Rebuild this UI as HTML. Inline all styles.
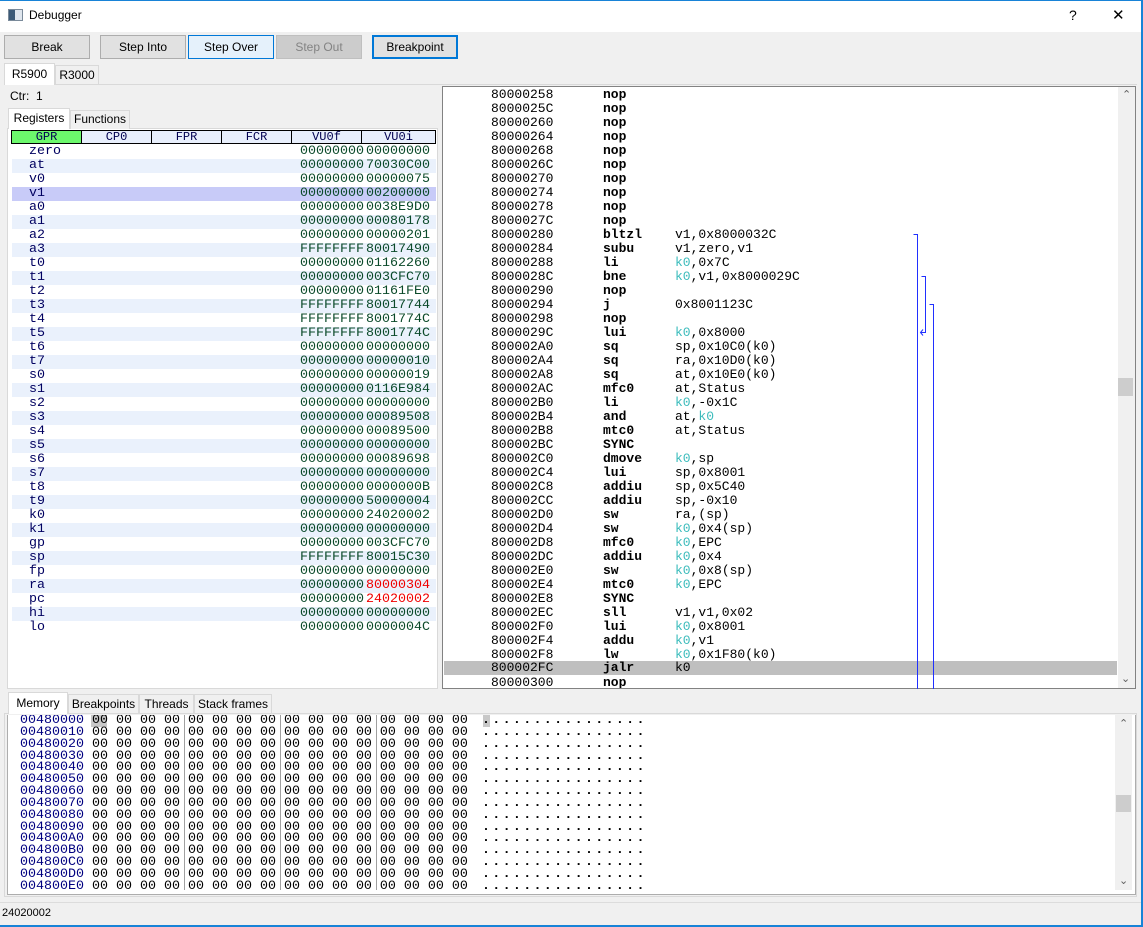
<!DOCTYPE html>
<html><head><meta charset="utf-8"><style>
*{margin:0;padding:0;box-sizing:border-box}
body{width:1143px;height:927px;background:#f0f0f0;font-family:"Liberation Sans",sans-serif;font-size:12px;position:relative;overflow:hidden;color:#000}
.a{position:absolute}
.btn{position:absolute;top:35px;height:24px;border:1px solid #adadad;background:#e1e1e1;text-align:center;line-height:22px;font-size:12px}
.mono{font-family:"Liberation Mono",monospace;font-size:13.33px}
.r{position:absolute;left:12px;width:424px;height:14px;line-height:14px;white-space:pre}
.r .n{position:absolute;left:17px;color:#000060}
.r .h{position:absolute;left:288px;color:#0b4a2a}
.r .l{position:absolute;left:354px;color:#0b4a2a}
.d{position:absolute;left:444px;width:673px;height:14px;line-height:14px;white-space:pre}
.d .ad{position:absolute;left:47px;color:#000}
.d .op{position:absolute;left:159px;font-weight:bold}
.d .ar{position:absolute;left:231px}
.k{color:#3cbcbc}
.tab{position:absolute;border:1px solid #d9d9d9;border-bottom:none;background:#f0f0f0;text-align:center;font-size:12px}
.hd{position:absolute;top:130px;height:14px;border:1px solid #000;border-left:none;background:#e8effc;text-align:center;line-height:12px;font-family:"Liberation Mono",monospace;font-size:12px;color:#000050}
</style></head><body>
<div class="a" style="left:0;top:0;width:1143px;height:32px;background:#fff;border-top:1px solid #1883d7"></div>
<div class="a" style="left:1141px;top:0;width:2px;height:927px;background:#1883d7"></div>
<div class="a" style="left:0;top:925px;width:1143px;height:2px;background:#1883d7"></div>
<div class="a" style="left:8px;top:9px;width:15px;height:12px;border:1px solid #7a8a9a;background:linear-gradient(90deg,#3c5a78 0 6px,#dfe6ee 6px)"></div>
<div class="a" style="left:29px;top:8px;font-size:12px">Debugger</div>
<div class="a" style="left:1069px;top:7px;font-size:14px">?</div>
<div class="a" style="left:1112px;top:6px;font-size:15px;font-weight:300">✕</div>

<div class="btn" style="left:4px;width:86px">Break</div>
<div class="btn" style="left:100px;width:86px">Step Into</div>
<div class="btn" style="left:188px;width:86px;background:#e5f1fb;border-color:#0078d7">Step Over</div>
<div class="btn" style="left:276px;width:86px;background:#cccccc;border-color:#bfbfbf;color:#838383">Step Out</div>
<div class="btn" style="left:372px;width:86px;border:2px solid #0078d7;line-height:20px">Breakpoint</div>

<div class="a" style="left:4px;top:84px;width:1133px;height:606px;border-top:1px solid #d9d9d9"></div>
<div class="tab" style="left:4px;top:63px;width:51px;height:22px;background:#fff;line-height:20px">R5900</div>
<div class="tab" style="left:55px;top:65px;width:44px;height:19px;line-height:18px">R3000</div>
<div class="a" style="left:10px;top:89px">Ctr:&nbsp; 1</div>

<div class="a" style="left:7px;top:128px;width:431px;height:561px;border:1px solid #d9d9d9;background:#fff"></div>
<div class="tab" style="left:8px;top:108px;width:62px;height:21px;background:#fff;line-height:18px">Registers</div>
<div class="tab" style="left:70px;top:110px;width:60px;height:19px;line-height:16px">Functions</div>

<div class="hd" style="left:11px;width:71px;background:#6cf86c;border-left:1px solid #000">GPR</div>
<div class="hd" style="left:82px;width:70px">CP0</div>
<div class="hd" style="left:152px;width:70px">FPR</div>
<div class="hd" style="left:222px;width:70px">FCR</div>
<div class="hd" style="left:292px;width:70px">VU0f</div>
<div class="hd" style="left:362px;width:74px">VU0i</div>

<div class="mono">
<div class="r" style="top:145px"><span class="n">zero</span><span class="h">00000000</span><span class="l">00000000</span></div>
<div class="r" style="top:159px;background:#eaf1fc"><span class="n">at</span><span class="h">00000000</span><span class="l">70030C00</span></div>
<div class="r" style="top:173px"><span class="n">v0</span><span class="h">00000000</span><span class="l">00000075</span></div>
<div class="r" style="top:187px;background:#c8cbf8"><span class="n">v1</span><span class="h">00000000</span><span class="l">00200000</span></div>
<div class="r" style="top:201px"><span class="n">a0</span><span class="h">00000000</span><span class="l">0038E9D0</span></div>
<div class="r" style="top:215px;background:#eaf1fc"><span class="n">a1</span><span class="h">00000000</span><span class="l">00080178</span></div>
<div class="r" style="top:229px"><span class="n">a2</span><span class="h">00000000</span><span class="l">00000201</span></div>
<div class="r" style="top:243px;background:#eaf1fc"><span class="n">a3</span><span class="h">FFFFFFFF</span><span class="l">80017490</span></div>
<div class="r" style="top:257px"><span class="n">t0</span><span class="h">00000000</span><span class="l">01162260</span></div>
<div class="r" style="top:271px;background:#eaf1fc"><span class="n">t1</span><span class="h">00000000</span><span class="l">003CFC70</span></div>
<div class="r" style="top:285px"><span class="n">t2</span><span class="h">00000000</span><span class="l">01161FE0</span></div>
<div class="r" style="top:299px;background:#eaf1fc"><span class="n">t3</span><span class="h">FFFFFFFF</span><span class="l">80017744</span></div>
<div class="r" style="top:313px"><span class="n">t4</span><span class="h">FFFFFFFF</span><span class="l">8001774C</span></div>
<div class="r" style="top:327px;background:#eaf1fc"><span class="n">t5</span><span class="h">FFFFFFFF</span><span class="l">8001774C</span></div>
<div class="r" style="top:341px"><span class="n">t6</span><span class="h">00000000</span><span class="l">00000000</span></div>
<div class="r" style="top:355px;background:#eaf1fc"><span class="n">t7</span><span class="h">00000000</span><span class="l">00000010</span></div>
<div class="r" style="top:369px"><span class="n">s0</span><span class="h">00000000</span><span class="l">00000019</span></div>
<div class="r" style="top:383px;background:#eaf1fc"><span class="n">s1</span><span class="h">00000000</span><span class="l">0116E984</span></div>
<div class="r" style="top:397px"><span class="n">s2</span><span class="h">00000000</span><span class="l">00000000</span></div>
<div class="r" style="top:411px;background:#eaf1fc"><span class="n">s3</span><span class="h">00000000</span><span class="l">00089508</span></div>
<div class="r" style="top:425px"><span class="n">s4</span><span class="h">00000000</span><span class="l">00089500</span></div>
<div class="r" style="top:439px;background:#eaf1fc"><span class="n">s5</span><span class="h">00000000</span><span class="l">00000000</span></div>
<div class="r" style="top:453px"><span class="n">s6</span><span class="h">00000000</span><span class="l">00089698</span></div>
<div class="r" style="top:467px;background:#eaf1fc"><span class="n">s7</span><span class="h">00000000</span><span class="l">00000000</span></div>
<div class="r" style="top:481px"><span class="n">t8</span><span class="h">00000000</span><span class="l">0000000B</span></div>
<div class="r" style="top:495px;background:#eaf1fc"><span class="n">t9</span><span class="h">00000000</span><span class="l">50000004</span></div>
<div class="r" style="top:509px"><span class="n">k0</span><span class="h">00000000</span><span class="l">24020002</span></div>
<div class="r" style="top:523px;background:#eaf1fc"><span class="n">k1</span><span class="h">00000000</span><span class="l">00000000</span></div>
<div class="r" style="top:537px"><span class="n">gp</span><span class="h">00000000</span><span class="l">003CFC70</span></div>
<div class="r" style="top:551px;background:#eaf1fc"><span class="n">sp</span><span class="h">FFFFFFFF</span><span class="l">80015C30</span></div>
<div class="r" style="top:565px"><span class="n">fp</span><span class="h">00000000</span><span class="l">00000000</span></div>
<div class="r" style="top:579px;background:#eaf1fc"><span class="n">ra</span><span class="h">00000000</span><span class="l" style="color:#f00000">80000304</span></div>
<div class="r" style="top:593px"><span class="n">pc</span><span class="h">00000000</span><span class="l" style="color:#f00000">24020002</span></div>
<div class="r" style="top:607px;background:#eaf1fc"><span class="n">hi</span><span class="h">00000000</span><span class="l">00000000</span></div>
<div class="r" style="top:621px"><span class="n">lo</span><span class="h">00000000</span><span class="l">0000004C</span></div>
</div>

<!-- disassembly -->
<div class="a" style="left:442px;top:86px;width:694px;height:603px;border:1px solid #828282;background:#fff"></div>
<div class="a" style="left:1118px;top:87px;width:17px;height:601px;background:#f0f0f0"></div>
<div class="a" style="left:1118px;top:378px;width:15px;height:18px;background:#cdcdcd"></div>
<div class="a" style="left:1122px;top:88px;font-size:11px;color:#606060">&#8963;</div>
<div class="a" style="left:1121px;top:672px;font-size:11px;color:#606060">&#8964;</div>
<div class="a" style="left:444px;top:661px;width:673px;height:14px;background:#bfbfbf"></div>
<div class="mono" style="font-size:13px">
<div class="d" style="top:88px"><span class="ad">80000258</span><span class="op">nop</span></div>
<div class="d" style="top:102px"><span class="ad">8000025C</span><span class="op">nop</span></div>
<div class="d" style="top:116px"><span class="ad">80000260</span><span class="op">nop</span></div>
<div class="d" style="top:130px"><span class="ad">80000264</span><span class="op">nop</span></div>
<div class="d" style="top:144px"><span class="ad">80000268</span><span class="op">nop</span></div>
<div class="d" style="top:158px"><span class="ad">8000026C</span><span class="op">nop</span></div>
<div class="d" style="top:172px"><span class="ad">80000270</span><span class="op">nop</span></div>
<div class="d" style="top:186px"><span class="ad">80000274</span><span class="op">nop</span></div>
<div class="d" style="top:200px"><span class="ad">80000278</span><span class="op">nop</span></div>
<div class="d" style="top:214px"><span class="ad">8000027C</span><span class="op">nop</span></div>
<div class="d" style="top:228px"><span class="ad">80000280</span><span class="op">bltzl</span><span class="ar">v1,0x8000032C</span></div>
<div class="d" style="top:242px"><span class="ad">80000284</span><span class="op">subu</span><span class="ar">v1,zero,v1</span></div>
<div class="d" style="top:256px"><span class="ad">80000288</span><span class="op">li</span><span class="ar"><span class="k">k0</span>,0x7C</span></div>
<div class="d" style="top:270px"><span class="ad">8000028C</span><span class="op">bne</span><span class="ar"><span class="k">k0</span>,v1,0x8000029C</span></div>
<div class="d" style="top:284px"><span class="ad">80000290</span><span class="op">nop</span></div>
<div class="d" style="top:298px"><span class="ad">80000294</span><span class="op">j</span><span class="ar">0x8001123C</span></div>
<div class="d" style="top:312px"><span class="ad">80000298</span><span class="op">nop</span></div>
<div class="d" style="top:326px"><span class="ad">8000029C</span><span class="op">lui</span><span class="ar"><span class="k">k0</span>,0x8000</span></div>
<div class="d" style="top:340px"><span class="ad">800002A0</span><span class="op">sq</span><span class="ar">sp,0x10C0(k0)</span></div>
<div class="d" style="top:354px"><span class="ad">800002A4</span><span class="op">sq</span><span class="ar">ra,0x10D0(k0)</span></div>
<div class="d" style="top:368px"><span class="ad">800002A8</span><span class="op">sq</span><span class="ar">at,0x10E0(k0)</span></div>
<div class="d" style="top:382px"><span class="ad">800002AC</span><span class="op">mfc0</span><span class="ar">at,Status</span></div>
<div class="d" style="top:396px"><span class="ad">800002B0</span><span class="op">li</span><span class="ar"><span class="k">k0</span>,-0x1C</span></div>
<div class="d" style="top:410px"><span class="ad">800002B4</span><span class="op">and</span><span class="ar">at,<span class="k">k0</span></span></div>
<div class="d" style="top:424px"><span class="ad">800002B8</span><span class="op">mtc0</span><span class="ar">at,Status</span></div>
<div class="d" style="top:438px"><span class="ad">800002BC</span><span class="op">SYNC</span></div>
<div class="d" style="top:452px"><span class="ad">800002C0</span><span class="op">dmove</span><span class="ar"><span class="k">k0</span>,sp</span></div>
<div class="d" style="top:466px"><span class="ad">800002C4</span><span class="op">lui</span><span class="ar">sp,0x8001</span></div>
<div class="d" style="top:480px"><span class="ad">800002C8</span><span class="op">addiu</span><span class="ar">sp,0x5C40</span></div>
<div class="d" style="top:494px"><span class="ad">800002CC</span><span class="op">addiu</span><span class="ar">sp,-0x10</span></div>
<div class="d" style="top:508px"><span class="ad">800002D0</span><span class="op">sw</span><span class="ar">ra,(sp)</span></div>
<div class="d" style="top:522px"><span class="ad">800002D4</span><span class="op">sw</span><span class="ar"><span class="k">k0</span>,0x4(sp)</span></div>
<div class="d" style="top:536px"><span class="ad">800002D8</span><span class="op">mfc0</span><span class="ar"><span class="k">k0</span>,EPC</span></div>
<div class="d" style="top:550px"><span class="ad">800002DC</span><span class="op">addiu</span><span class="ar"><span class="k">k0</span>,0x4</span></div>
<div class="d" style="top:564px"><span class="ad">800002E0</span><span class="op">sw</span><span class="ar"><span class="k">k0</span>,0x8(sp)</span></div>
<div class="d" style="top:578px"><span class="ad">800002E4</span><span class="op">mtc0</span><span class="ar"><span class="k">k0</span>,EPC</span></div>
<div class="d" style="top:592px"><span class="ad">800002E8</span><span class="op">SYNC</span></div>
<div class="d" style="top:606px"><span class="ad">800002EC</span><span class="op">sll</span><span class="ar">v1,v1,0x02</span></div>
<div class="d" style="top:620px"><span class="ad">800002F0</span><span class="op">lui</span><span class="ar"><span class="k">k0</span>,0x8001</span></div>
<div class="d" style="top:634px"><span class="ad">800002F4</span><span class="op">addu</span><span class="ar"><span class="k">k0</span>,v1</span></div>
<div class="d" style="top:648px"><span class="ad">800002F8</span><span class="op">lw</span><span class="ar"><span class="k">k0</span>,0x1F80(k0)</span></div>
<div class="d" style="top:661px"><span class="ad">800002FC</span><span class="op">jalr</span><span class="ar">k0</span></div>
<div class="d" style="top:676px;height:12px;overflow:hidden"><span class="ad">80000300</span><span class="op">nop</span></div>
</div>
<svg class="a" style="left:900px;top:220px" width="50" height="469">
<g stroke="#2030ff" stroke-width="1" fill="none">
<path d="M13.5 14.5H17.5V469"/>
<path d="M21.5 56.5H25.5V112.5H20.5M23 109.5L20.5 112.5L23 115.5"/>
<path d="M29.5 84.5H33.5V469"/>
</g></svg>

<!-- memory -->
<div class="a" style="left:4px;top:713px;width:1133px;height:184px;border:1px solid #d9d9d9;background:#f0f0f0"></div>
<div class="tab" style="left:8px;top:692px;width:60px;height:22px;background:#fff;line-height:20px">Memory</div>
<div class="tab" style="left:68px;top:694px;width:71px;height:19px;line-height:19px">Breakpoints</div>
<div class="tab" style="left:139px;top:694px;width:55px;height:19px;line-height:19px">Threads</div>
<div class="tab" style="left:194px;top:694px;width:78px;height:19px;line-height:19px">Stack frames</div>
<div class="a" style="left:7px;top:715px;width:1129px;height:180px;border:1px solid #adadad;border-top:none;background:#fff;overflow:hidden">
<div class="a" style="left:1107px;top:0;width:17px;height:175px;background:#f0f0f0"></div>
<div class="a" style="left:1108px;top:80px;width:15px;height:17px;background:#cdcdcd"></div>
<div class="a" style="left:1111px;top:2px;font-size:11px;color:#606060">&#8963;</div>
<div class="a" style="left:1111px;top:159px;font-size:11px;color:#606060">&#8964;</div>
<div class="a" style="left:176px;top:0;width:1px;height:175px;background:#a0a0a0"></div>
<div class="a" style="left:272px;top:0;width:1px;height:175px;background:#a0a0a0"></div>
<div class="a" style="left:368px;top:0;width:1px;height:175px;background:#a0a0a0"></div>
<div class="a" style="left:83px;top:0;width:16px;height:12px;background:#c8c8c8"></div>
<div class="a" style="left:475px;top:0;width:7px;height:12px;background:#c8c8c8"></div>
<pre class="a mono" style="left:12px;top:0;line-height:11.85px;color:#000"><span style="color:#000080">00480000</span> 00 00 00 00 00 00 00 00 00 00 00 00 00 00 00 00
<span style="color:#000080">00480010</span> 00 00 00 00 00 00 00 00 00 00 00 00 00 00 00 00
<span style="color:#000080">00480020</span> 00 00 00 00 00 00 00 00 00 00 00 00 00 00 00 00
<span style="color:#000080">00480030</span> 00 00 00 00 00 00 00 00 00 00 00 00 00 00 00 00
<span style="color:#000080">00480040</span> 00 00 00 00 00 00 00 00 00 00 00 00 00 00 00 00
<span style="color:#000080">00480050</span> 00 00 00 00 00 00 00 00 00 00 00 00 00 00 00 00
<span style="color:#000080">00480060</span> 00 00 00 00 00 00 00 00 00 00 00 00 00 00 00 00
<span style="color:#000080">00480070</span> 00 00 00 00 00 00 00 00 00 00 00 00 00 00 00 00
<span style="color:#000080">00480080</span> 00 00 00 00 00 00 00 00 00 00 00 00 00 00 00 00
<span style="color:#000080">00480090</span> 00 00 00 00 00 00 00 00 00 00 00 00 00 00 00 00
<span style="color:#000080">004800A0</span> 00 00 00 00 00 00 00 00 00 00 00 00 00 00 00 00
<span style="color:#000080">004800B0</span> 00 00 00 00 00 00 00 00 00 00 00 00 00 00 00 00
<span style="color:#000080">004800C0</span> 00 00 00 00 00 00 00 00 00 00 00 00 00 00 00 00
<span style="color:#000080">004800D0</span> 00 00 00 00 00 00 00 00 00 00 00 00 00 00 00 00
<span style="color:#000080">004800E0</span> 00 00 00 00 00 00 00 00 00 00 00 00 00 00 00 00</pre>
<pre class="a mono" style="left:474px;top:0;line-height:11.85px;letter-spacing:2.3px;font-weight:bold;color:#000">................
................
................
................
................
................
................
................
................
................
................
................
................
................
................</pre>
</div>
<div class="a" style="left:0;top:902px;width:1141px;height:1px;background:#dcdcdc"></div>
<div class="a" style="left:2px;top:907px;font-size:11px">24020002</div>
</body></html>
